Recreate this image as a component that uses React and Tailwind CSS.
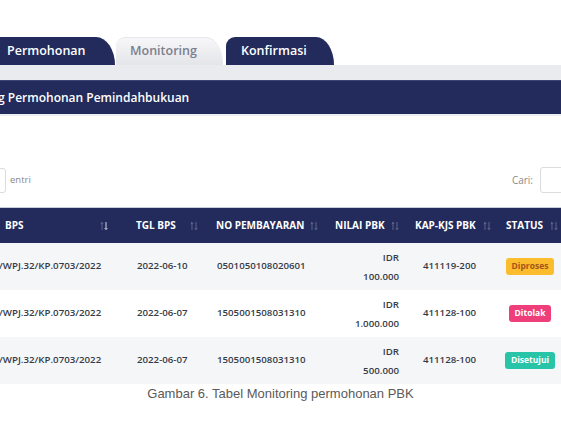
import React from "react";

function SortIcon({ active }) {
  return (
    <svg width="8" height="10" viewBox="0 0 8 10" fill="none" className="shrink-0">
      <path d="M2 9V1.5M0.7 2.8L2 1.5L3.3 2.8" stroke="#ffffff" strokeOpacity="0.28" strokeWidth="1" />
      <path d="M6 1V8.5M4.7 7.2L6 8.5L7.3 7.2" stroke="#ffffff" strokeOpacity={active ? 0.8 : 0.28} strokeWidth="1" />
    </svg>
  );
}

const cols = [
  { label: "BPS", w: "w-[136px] pl-[15px] pr-[18px]", active: true },
  { label: "TGL BPS", w: "w-[80px] pl-[10px] pr-[8px]" },
  { label: "NO PEMBAYARAN", w: "w-[119px] pl-[10px] pr-[7px]" },
  { label: "NILAI PBK", w: "w-[80px] pl-[10px] pr-[6px]" },
  { label: "KAP-KJS PBK", w: "w-[93px] pl-[10px] pr-[7px]" },
  { label: "STATUS", w: "w-[64px] pl-[8px] pr-[4px]" },
];

const rows = [
  { bps: "/WPJ.32/KP.0703/2022", tgl: "2022-06-10", no: "0501050108020601", nilai: "100.000", kap: "411119-200", status: "Diproses", bg: "bg-[#f5f6f8]" },
  { bps: "/WPJ.32/KP.0703/2022", tgl: "2022-06-07", no: "1505001508031310", nilai: "1.000.000", kap: "411128-100", status: "Ditolak", bg: "bg-white" },
  { bps: "/WPJ.32/KP.0703/2022", tgl: "2022-06-07", no: "1505001508031310", nilai: "500.000", kap: "411128-100", status: "Disetujui", bg: "bg-[#f5f6f8]" },
];

function Badge({ status }) {
  const cls =
    status === "Diproses"
      ? "bg-[#fbbd2d] text-[#a5541a]"
      : status === "Ditolak"
      ? "bg-[#ee3f7b] text-white"
      : "bg-[#27c4a7] text-white";
  return (
    <span className={`${cls} inline-flex h-[17px] items-center rounded-[3px] px-[6px] text-[8.5px] font-bold`}>
      {status}
    </span>
  );
}

export default function App() {
  return (
    <div
      className="relative h-[421px] w-[561px] overflow-hidden bg-white"
      style={{ fontFamily: '"Open Sans", "Noto Sans", sans-serif' }}
    >
      <div className="h-[37px]" />
      {/* Tabs */}
      <div className="flex h-[28px] items-end">
        <div className="ml-[-20px] flex h-[28px] w-[135px] items-center rounded-tl-[10px] rounded-tr-[19px_28px] bg-[#222b5c] pl-[27px] text-[12.5px] font-semibold text-white">
          Permohonan
        </div>
        <div className="ml-[1px] flex h-[28px] w-[107px] items-center rounded-tl-[9px] rounded-tr-[17px_28px] border-t border-[#e6e7ea] bg-gradient-to-b from-[#f7f7f9] to-[#e4e5e9] pl-[14px] text-[12.5px] font-semibold text-[#7b808d]">
          Monitoring
        </div>
        <div className="ml-[3px] flex h-[28px] w-[108px] items-center rounded-tl-[9px] rounded-tr-[18px_28px] bg-[#222b5c] pl-[15px] text-[12.5px] font-semibold text-white">
          Konfirmasi
        </div>
      </div>
      <div className="h-[15px] bg-[#eaebef]" />
      <div className="flex h-[34px] items-center border-t border-[#3a4576] bg-[#222b5c] text-[12px] font-semibold text-white">
        <span className="ml-[-2px] whitespace-nowrap">g Permohonan Pemindahbukuan</span>
      </div>
      <div className="h-[2px] bg-[#eceef2]" />
      <div className="h-[51px]" />
      {/* Controls */}
      <div className="flex h-[26px] items-center justify-between">
        <div className="flex items-center">
          <div className="ml-[-20px] h-[25px] w-[26px] rounded-[3px] border border-[#dcdcdc]" />
          <span className="ml-[4px] text-[9.5px] text-[#8a8a8a]">entri</span>
        </div>
        <div className="flex items-center">
          <span className="text-[10px] text-[#8a8a8a]">Cari:</span>
          <div className="ml-[7px] mr-[-20px] h-[26px] w-[41px] rounded-[3px] border border-[#dcdcdc]" />
        </div>
      </div>
      <div className="h-[14px]" />
      {/* Table */}
      <div className="ml-[-10px]">
        <div className="flex h-[36px] items-center border-t border-[#c9cedc] bg-[#222b5c] text-[10px] font-bold text-white">
          {cols.map((c) => (
            <div key={c.label} className={`${c.w} flex shrink-0 items-center justify-between`}>
              <span>{c.label}</span>
              <SortIcon active={c.active} />
            </div>
          ))}
        </div>
        {rows.map((r, i) => (
          <div key={i} className={`${r.bg} flex h-[47px] items-center text-[9.7px] font-semibold text-[#353b48]`}>
            <div className="w-[136px] shrink-0 pl-[9px]">{r.bps}</div>
            <div className="w-[80px] shrink-0 pl-[11px]">{r.tgl}</div>
            <div className="w-[119px] shrink-0 pl-[11px]">{r.no}</div>
            <div className="flex w-[80px] shrink-0 flex-col items-end pr-[6px] leading-[19px]">
              <span>IDR</span>
              <span>{r.nilai}</span>
            </div>
            <div className="w-[93px] shrink-0 pl-[18px]">{r.kap}</div>
            <div className="flex w-[64px] shrink-0 justify-center">
              <Badge status={r.status} />
            </div>
          </div>
        ))}
      </div>
      <div
        className="pt-[2px] text-center text-[13px] leading-[16px] text-[#5a5a5a]"
        style={{ fontFamily: '"Liberation Sans", Arial, sans-serif' }}
      >
        Gambar 6. Tabel Monitoring permohonan PBK
      </div>
    </div>
  );
}
